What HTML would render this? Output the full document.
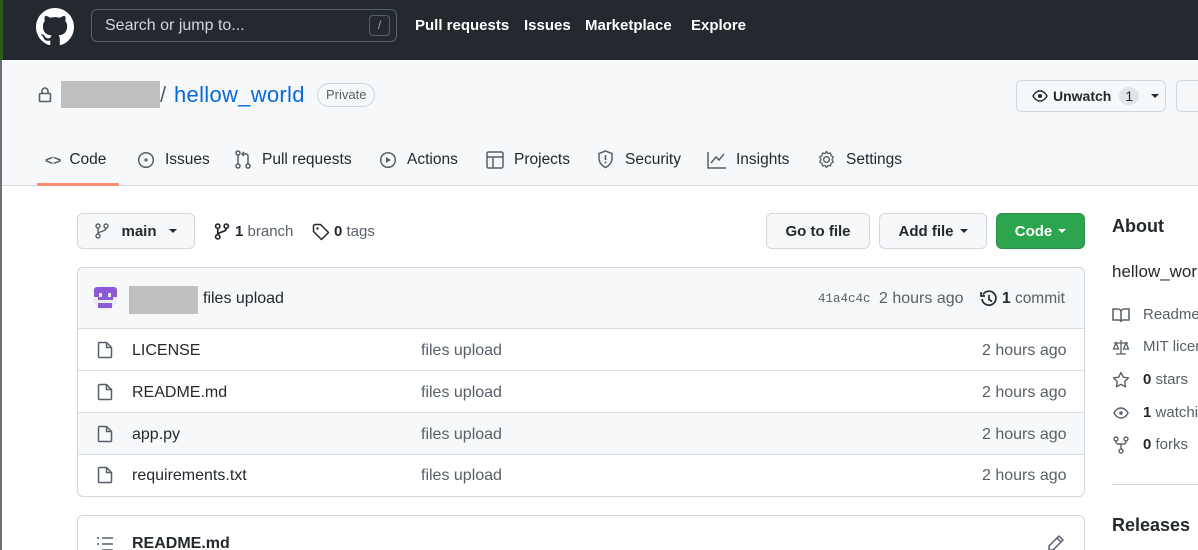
<!DOCTYPE html>
<html style="overflow:hidden;height:550px"><head><meta charset="utf-8"><style>
*{box-sizing:border-box;margin:0;padding:0}
body{width:1198px;height:550px;overflow:hidden;background:#fff;font-family:"Liberation Sans","DejaVu Sans",sans-serif;color:#24292f;position:relative;font-size:16px}
.a{position:absolute;white-space:nowrap}
svg{display:block}
.hdr{position:absolute;left:0;top:0;width:1198px;height:60px;background:#24292f}
.sub{position:absolute;left:0;top:60px;width:1198px;height:126px;background:#f6f8fa;border-bottom:1px solid #d0d7de}
.btn{position:absolute;border:1px solid #d0d7de;border-radius:6px;background:#f6f8fa;height:36px;font-size:15px;font-weight:bold;display:flex;align-items:center;justify-content:center}
.caret{display:inline-block;width:0;height:0;border-left:4px solid transparent;border-right:4px solid transparent;border-top:4px solid currentColor;margin-left:6px}
.gray{color:#57606a}
.row{position:absolute;left:78px;width:1006px;height:42px;border-top:1px solid #d8dee4}
.tab{font-size:15.5px}
</style></head><body>
<div class="hdr"></div>
<div class="a" style="left:0;top:0;width:3px;height:60px;background:#2d5a1b"></div>
<svg class="a" style="left:36px;top:8px" width="38" height="38" viewBox="0 0 16 16"><path fill="#fff" d="M8 0C3.58 0 0 3.58 0 8c0 3.54 2.29 6.53 5.47 7.59.4.07.55-.17.55-.38 0-.19-.01-.82-.01-1.49-2.01.37-2.53-.49-2.69-.94-.09-.23-.48-.94-.82-1.13-.28-.15-.68-.52-.01-.53.63-.01 1.08.58 1.23.82.72 1.21 1.87.87 2.33.66.07-.52.28-.87.51-1.07-1.78-.2-3.64-.89-3.64-3.95 0-.87.31-1.59.82-2.15-.08-.2-.36-1.02.08-2.12 0 0 .67-.21 2.2.82.64-.18 1.32-.27 2-.27.68 0 1.36.09 2 .27 1.53-1.04 2.2-.82 2.2-.82.44 1.1.16 1.92.08 2.12.51.56.82 1.27.82 2.15 0 3.07-1.87 3.75-3.65 3.95.29.25.54.73.54 1.48 0 1.07-.01 1.93-.01 2.2 0 .21.15.46.55.38A8.013 8.013 0 0016 8c0-4.42-3.58-8-8-8z"/></svg>
<div class="a" style="left:91px;top:9px;width:306px;height:33px;border:1px solid #57606a;border-radius:6px"></div>
<div class="a" style="left:105px;top:17px;color:#d0d7de;font-size:16px">Search or jump to...</div>
<div class="a" style="left:369px;top:15px;width:21px;height:21px;border:1px solid #57606a;border-radius:4px;color:#9ea7b3;font-size:12px;text-align:center;line-height:19px">/</div>
<div class="a" style="left:415px;top:17px;color:#fff;font-weight:bold;font-size:15px">Pull requests</div>
<div class="a" style="left:524px;top:17px;color:#fff;font-weight:bold;font-size:15px">Issues</div>
<div class="a" style="left:585px;top:17px;color:#fff;font-weight:bold;font-size:15px">Marketplace</div>
<div class="a" style="left:691px;top:17px;color:#fff;font-weight:bold;font-size:15px">Explore</div>

<div class="sub"></div>
<div class="a" style="left:0;top:60px;width:2px;height:490px;background:#6e7075"></div>
<svg class="a" style="left:37px;top:86px" width="16" height="17" viewBox="0 0 16 17"><rect x="2.5" y="7.5" width="11" height="8" rx="1" fill="none" stroke="#57606a" stroke-width="1.6"/><path d="M5 7.5V5a3 3 0 016 0v2.5" fill="none" stroke="#57606a" stroke-width="1.6"/></svg>
<div class="a" style="left:61px;top:81px;width:99px;height:27px;background:#c0c0c0"></div>
<div class="a" style="left:160px;top:82px;font-size:22px;color:#57606a">/</div>
<div class="a" style="left:174px;top:82px;font-size:22px;color:#0969da;letter-spacing:0.3px">hellow_world</div>
<div class="a" style="left:317px;top:83px;height:24px;padding:0 8px;border:1px solid #d0d7de;border-radius:12px;font-size:13px;color:#57606a;line-height:22px">Private</div>
<div class="btn" style="left:1016px;top:80px;width:150px;height:32px;background:#f6f8fa;font-size:14px;justify-content:flex-start;padding-left:14px">
<svg width="18" height="16" viewBox="0 0 16 16"><path d="M1 8s2.5-5 7-5 7 5 7 5-2.5 5-7 5-7-5-7-5z" fill="none" stroke="#24292f" stroke-width="1.4"/><circle cx="8" cy="8" r="2" fill="#24292f"/></svg>
<span style="margin-left:4px">Unwatch</span><span style="margin-left:8px;background:#e1e4e8;border-radius:10px;padding:1px 6px;font-weight:normal">1</span><span class="caret" style="margin-left:12px"></span></div>
<div class="a" style="left:1176px;top:80px;width:40px;height:32px;border:1px solid #d0d7de;border-radius:6px;background:#f6f8fa"></div>

<!-- tabs -->
<div class="a tab" style="left:45px;top:151px;display:flex;align-items:center">
<span style="color:#57606a;font-weight:bold;font-size:14px">&lt;&gt;</span><span style="margin-left:8px">Code</span></div>
<div class="a" style="left:37px;top:183px;width:82px;height:3px;background:#fd8c73"></div>
<svg class="a" style="left:137px;top:151px" width="18" height="18" viewBox="0 0 18 18"><circle cx="9" cy="9" r="7.3" fill="none" stroke="#57606a" stroke-width="1.5"/><circle cx="9" cy="9" r="1.6" fill="#57606a"/></svg>
<div class="a tab" style="left:165px;top:151px">Issues</div>
<svg class="a" style="left:234px;top:150px" width="18" height="19" viewBox="0 0 18 19"><circle cx="4" cy="3" r="2" fill="none" stroke="#57606a" stroke-width="1.5"/><circle cx="4" cy="16" r="2" fill="none" stroke="#57606a" stroke-width="1.5"/><circle cx="14" cy="16" r="2" fill="none" stroke="#57606a" stroke-width="1.5"/><path d="M4 5v9M14 14V6a2 2 0 00-2-2H9M10 2L8 4l2 2" fill="none" stroke="#57606a" stroke-width="1.5"/></svg>
<div class="a tab" style="left:262px;top:151px">Pull requests</div>
<svg class="a" style="left:379px;top:151px" width="18" height="18" viewBox="0 0 18 18"><circle cx="9" cy="9" r="7.3" fill="none" stroke="#57606a" stroke-width="1.5"/><path d="M7 6v6l5-3z" fill="#57606a"/></svg>
<div class="a tab" style="left:407px;top:151px">Actions</div>
<svg class="a" style="left:486px;top:151px" width="18" height="18" viewBox="0 0 18 18"><rect x="1" y="1" width="16" height="16" rx="1.5" fill="none" stroke="#57606a" stroke-width="1.5"/><path d="M1 6h16M7 6v11" stroke="#57606a" stroke-width="1.5"/></svg>
<div class="a tab" style="left:514px;top:151px">Projects</div>
<svg class="a" style="left:597px;top:150px" width="17" height="19" viewBox="0 0 17 19"><path d="M8.5 1L2 3.5v5c0 4 3 7.5 6.5 9 3.5-1.5 6.5-5 6.5-9v-5z" fill="none" stroke="#57606a" stroke-width="1.5"/><path d="M8.5 5v5" stroke="#57606a" stroke-width="1.6"/><circle cx="8.5" cy="12.5" r="1" fill="#57606a"/></svg>
<div class="a tab" style="left:625px;top:151px">Security</div>
<svg class="a" style="left:707px;top:151px" width="20" height="18" viewBox="0 0 20 18"><path d="M1 1v16h18M4 12l5-6 3 3 5-6" fill="none" stroke="#57606a" stroke-width="1.5"/></svg>
<div class="a tab" style="left:736px;top:151px">Insights</div>
<svg class="a" style="left:817px;top:150px" width="19" height="19" viewBox="0 0 20 20"><circle cx="10" cy="10" r="3" fill="none" stroke="#57606a" stroke-width="1.5"/><path d="M10 1.5l1.5 2.3 2.7-.6.6 2.7 2.3 1.5-1.3 2.6 1.3 2.6-2.3 1.5-.6 2.7-2.7-.6L10 18.5l-1.5-2.3-2.7.6-.6-2.7L2.9 12.6 4.2 10 2.9 7.4l2.3-1.5.6-2.7 2.7.6z" fill="none" stroke="#57606a" stroke-width="1.4" stroke-linejoin="round"/></svg>
<div class="a tab" style="left:846px;top:151px">Settings</div>

<!-- branch bar -->
<div class="btn" style="left:77px;top:213px;width:118px;font-size:15px">
<svg width="14" height="16" viewBox="0 0 14 16"><circle cx="3" cy="3" r="2" fill="none" stroke="#57606a" stroke-width="1.4"/><circle cx="3" cy="13" r="2" fill="none" stroke="#57606a" stroke-width="1.4"/><circle cx="11" cy="3" r="2" fill="none" stroke="#57606a" stroke-width="1.4"/><path d="M3 5v6M11 5c0 4-8 3-8 6" fill="none" stroke="#57606a" stroke-width="1.4"/></svg>
<span style="margin-left:12px">main</span><span class="caret" style="margin-left:12px"></span></div>
<svg class="a" style="left:214px;top:223px" width="16" height="17" viewBox="0 0 14 16"><circle cx="3" cy="3" r="2" fill="none" stroke="#24292f" stroke-width="1.6"/><circle cx="3" cy="13" r="2" fill="none" stroke="#24292f" stroke-width="1.6"/><circle cx="11" cy="3" r="2" fill="none" stroke="#24292f" stroke-width="1.6"/><path d="M3 5v6M11 5c0 4-8 3-8 6" fill="none" stroke="#24292f" stroke-width="1.6"/></svg>
<div class="a" style="left:235px;top:223px;font-size:15px"><b>1</b> <span class="gray">branch</span></div>
<svg class="a" style="left:312px;top:223px" width="18" height="18" viewBox="0 0 18 18"><path d="M1.5 2.5v6l8 8 7-7-8-8h-6z" fill="none" stroke="#24292f" stroke-width="1.5" stroke-linejoin="round"/><circle cx="5.5" cy="5.5" r="1.2" fill="#24292f"/></svg>
<div class="a" style="left:334px;top:223px;font-size:15px"><b>0</b> <span class="gray">tags</span></div>
<div class="btn" style="left:766px;top:213px;width:104px">Go to file</div>
<div class="btn" style="left:879px;top:213px;width:108px">Add file<span class="caret"></span></div>
<div class="btn" style="left:996px;top:213px;width:89px;background:#2da44e;border-color:#2a9347;color:#fff">Code<span class="caret"></span></div>

<!-- file box -->
<div class="a" style="left:77px;top:267px;width:1008px;height:230px;border:1px solid #d0d7de;border-radius:6px"></div>
<div class="a" style="left:78px;top:268px;width:1006px;height:60px;background:#f6f8fa;border-radius:6px 6px 0 0"></div>
<div class="a" style="left:93px;top:286px;width:24px;height:24px;border-radius:50%;background:#ebebeb"></div>
<div class="a" style="left:94px;top:287px;width:23px;height:10px;background:#8c5ad6;border-radius:3px 3px 0 0"></div>
<div class="a" style="left:99px;top:293px;width:3px;height:4px;background:#ebebeb"></div><div class="a" style="left:108px;top:293px;width:3px;height:4px;background:#ebebeb"></div>
<div class="a" style="left:98px;top:297px;width:15px;height:3px;background:#8c5ad6"></div>
<div class="a" style="left:98px;top:303px;width:14px;height:5px;background:#8c5ad6"></div>
<div class="a" style="left:129px;top:286px;width:69px;height:28px;background:#c0c0c0"></div>
<div class="a" style="left:203px;top:290px">files upload</div>
<div class="a" style="left:818px;top:292px;font-family:'Liberation Mono',monospace;font-size:12.5px;color:#57606a">41a4c4c</div>
<div class="a gray" style="left:879px;top:290px">2 hours ago</div>
<svg class="a" style="left:980px;top:290px" width="18" height="18" viewBox="0 0 18 18"><path d="M3 4.5A7 7 0 1 1 2 9" fill="none" stroke="#24292f" stroke-width="1.7"/><path d="M1 2v4h4" fill="none" stroke="#24292f" stroke-width="1.7"/><path d="M9 5v4.5l3 2" fill="none" stroke="#24292f" stroke-width="1.7"/></svg>
<div class="a" style="left:1002px;top:290px;font-size:15.5px"><b>1</b> <span class="gray">commit</span></div>

<div class="row" style="top:328px"></div>
<div class="row" style="top:370px"></div>
<div class="row" style="top:412px;background:#f6f8fa"></div>
<div class="row" style="top:454px;height:42px;border-radius:0 0 6px 6px"></div>

<svg class="a" style="left:97px;top:341px" width="16" height="18" viewBox="0 0 16 18"><path d="M1.5 2.5a1 1 0 011-1h7l5 5v9a1 1 0 01-1 1h-11a1 1 0 01-1-1z M9.5 1.5v5h5" fill="none" stroke="#57606a" stroke-width="1.5"/></svg>
<svg class="a" style="left:97px;top:383px" width="16" height="18" viewBox="0 0 16 18"><path d="M1.5 2.5a1 1 0 011-1h7l5 5v9a1 1 0 01-1 1h-11a1 1 0 01-1-1z M9.5 1.5v5h5" fill="none" stroke="#57606a" stroke-width="1.5"/></svg>
<svg class="a" style="left:97px;top:425px" width="16" height="18" viewBox="0 0 16 18"><path d="M1.5 2.5a1 1 0 011-1h7l5 5v9a1 1 0 01-1 1h-11a1 1 0 01-1-1z M9.5 1.5v5h5" fill="none" stroke="#57606a" stroke-width="1.5"/></svg>
<svg class="a" style="left:97px;top:466px" width="16" height="18" viewBox="0 0 16 18"><path d="M1.5 2.5a1 1 0 011-1h7l5 5v9a1 1 0 01-1 1h-11a1 1 0 01-1-1z M9.5 1.5v5h5" fill="none" stroke="#57606a" stroke-width="1.5"/></svg>
<div class="a" style="left:132px;top:342px">LICENSE</div>
<div class="a" style="left:132px;top:384px">README.md</div>
<div class="a" style="left:132px;top:426px">app.py</div>
<div class="a" style="left:132px;top:467px">requirements.txt</div>
<div class="a gray" style="left:421px;top:342px">files upload</div>
<div class="a gray" style="left:421px;top:384px">files upload</div>
<div class="a gray" style="left:421px;top:426px">files upload</div>
<div class="a gray" style="left:421px;top:467px">files upload</div>
<div class="a gray" style="left:982px;top:342px">2 hours ago</div>
<div class="a gray" style="left:982px;top:384px">2 hours ago</div>
<div class="a gray" style="left:982px;top:426px">2 hours ago</div>
<div class="a gray" style="left:982px;top:467px">2 hours ago</div>

<!-- readme box -->
<div class="a" style="left:77px;top:515px;width:1008px;height:35px;border:1px solid #d0d7de;border-bottom:none;border-radius:6px 6px 0 0"></div>
<svg class="a" style="left:96px;top:536px" width="18" height="14" viewBox="0 0 18 14"><path d="M6 2h11M6 8h11M6 14h11" stroke="#57606a" stroke-width="1.5"/><circle cx="2" cy="2" r="1" fill="#57606a"/><circle cx="2" cy="8" r="1" fill="#57606a"/></svg>
<div class="a" style="left:132px;top:535px;font-weight:bold;height:15px;overflow:hidden;line-height:18px">README.md</div>
<svg class="a" style="left:1047px;top:534px" width="18" height="16" viewBox="0 0 18 16"><path d="M12 2l4 4-10 10H2v-4z M10 4l4 4" fill="none" stroke="#57606a" stroke-width="1.5" stroke-linejoin="round"/></svg>

<!-- sidebar -->
<div class="a" style="left:1112px;top:216px;font-size:18px;font-weight:bold">About</div>
<div class="a" style="left:1112px;top:262px;font-size:17px">hellow_world</div>
<svg class="a" style="left:1112px;top:307px" width="18" height="16" viewBox="0 0 18 16"><path d="M1 2h5a3 3 0 013 3v10a2 2 0 00-2-2H1zM17 2h-5a3 3 0 00-3 3v10a2 2 0 012-2h6z" fill="none" stroke="#57606a" stroke-width="1.5"/></svg>
<div class="a gray" style="left:1143px;top:306px;font-size:15px">Readme</div>
<svg class="a" style="left:1112px;top:339px" width="18" height="16" viewBox="0 0 18 16"><path d="M9 1v14M4 15h10M2 4h14M4 4l-2.5 6h5zM14 4l-2.5 6h5z" fill="none" stroke="#57606a" stroke-width="1.3"/></svg>
<div class="a gray" style="left:1143px;top:338px;font-size:15px">MIT license</div>
<svg class="a" style="left:1112px;top:371px" width="18" height="18" viewBox="0 0 18 18"><path d="M9 1.5l2.3 4.7 5.2.7-3.8 3.7.9 5.2L9 13.4l-4.6 2.4.9-5.2L1.5 6.9l5.2-.7z" fill="none" stroke="#57606a" stroke-width="1.4" stroke-linejoin="round"/></svg>
<div class="a" style="left:1143px;top:371px;font-size:15px"><b>0</b> <span class="gray">stars</span></div>
<svg class="a" style="left:1112px;top:405px" width="18" height="16" viewBox="0 0 16 16"><path d="M1 8s2.5-5 7-5 7 5 7 5-2.5 5-7 5-7-5-7-5z" fill="none" stroke="#57606a" stroke-width="1.4"/><circle cx="8" cy="8" r="1.8" fill="#57606a"/></svg>
<div class="a" style="left:1143px;top:404px;font-size:15px"><b>1</b> <span class="gray">watching</span></div>
<svg class="a" style="left:1113px;top:436px" width="16" height="18" viewBox="0 0 16 18"><circle cx="3" cy="3" r="2" fill="none" stroke="#57606a" stroke-width="1.4"/><circle cx="13" cy="3" r="2" fill="none" stroke="#57606a" stroke-width="1.4"/><circle cx="8" cy="15" r="2" fill="none" stroke="#57606a" stroke-width="1.4"/><path d="M3 5v1a2 2 0 002 2h6a2 2 0 002-2V5M8 8v5" fill="none" stroke="#57606a" stroke-width="1.4"/></svg>
<div class="a" style="left:1143px;top:436px;font-size:15px"><b>0</b> <span class="gray">forks</span></div>
<div class="a" style="left:1112px;top:484px;width:90px;height:1px;background:#d0d7de"></div>
<div class="a" style="left:1112px;top:515px;font-size:18px;font-weight:bold">Releases</div>
</body></html>
